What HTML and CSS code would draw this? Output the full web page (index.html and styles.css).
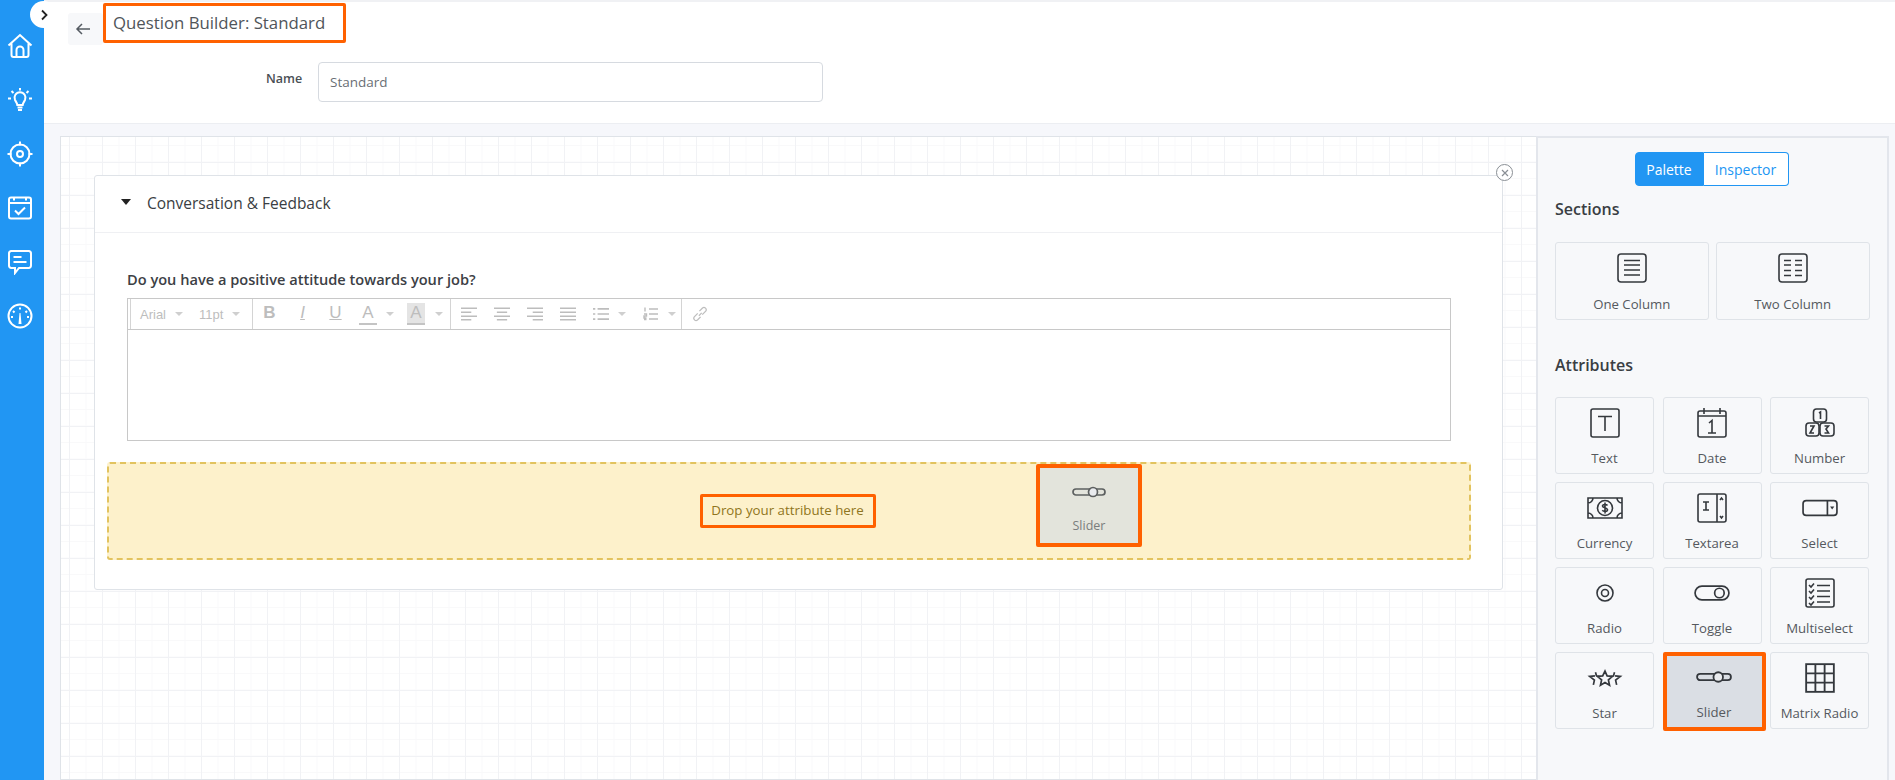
FILE: index.html
```html
<!DOCTYPE html>
<html lang="en">
<head>
  <meta charset="UTF-8">
  <title>Question Builder: Standard</title>
  <link rel="stylesheet" href="styles.css">
</head>
<body>
  <svg class="defs" width="0" height="0">
    <symbol id="i-slider" viewBox="0 0 34 14"><rect x="1" y="4" width="32" height="6" rx="3" fill="none" stroke="currentColor" stroke-width="1.7"/><circle cx="21" cy="7" r="4.500" fill="#e9ebee" stroke="currentColor" stroke-width="1.7"/></symbol>
  </svg>

  <div class="app">
    <aside class="sidebar">
      <button class="side-toggle"><svg width="12" height="12" viewBox="0 0 12 12"><path d="M4 1.5 8.5 6 4 10.5" fill="none" stroke="#222" stroke-width="1.8"/></svg></button>
      <svg class="nav-icon" viewBox="0 0 26 26"><path d="M1.5 12.5 13 2l11.5 10.500M4.500 10.500V22a2 2 0 0 0 2 2h13a2 2 0 0 0 2-2V10.500M9.500 24v-7a3.500 3.500 0 0 1 7 0v7"/></svg>
      <svg class="nav-icon" viewBox="0 0 26 26"><path d="M8 13a5.500 5.500 0 1 1 10 0c-1 1.700-2 3-2.300 5h-5.400C10 16 9 14.700 8 13zM10.500 20.500h5M11 23h4M13 1v2.500M4.500 4l2 2M21.500 4l-2 2M1 11.500h3M22 11.500h3"/></svg>
      <svg class="nav-icon" viewBox="0 0 26 26"><circle cx="13" cy="13" r="9.500"/><circle cx="13" cy="13" r="3"/><path d="M13 0.500v4M13 21.500v4M0.500 13h4M21.500 13h4"/></svg>
      <svg class="nav-icon" viewBox="0 0 26 26"><rect x="2" y="2.500" width="22" height="21" rx="2"/><path d="M2 8h22M7 2.500v3M19 2.500v3M8 15.500l3.500 3.500 6.500-6.500"/></svg>
      <svg class="nav-icon" viewBox="0 0 26 26"><path d="M4 2h18a2.500 2.500 0 0 1 2 2.500v12a2.500 2.500 0 0 1-2 2.500H12l-4 5v-5H4a2.500 2.500 0 0 1-2-2.500v-12A2.500 2.500 0 0 1 4 2z"/><path d="M6.500 8h8M6.500 13h13"/></svg>
      <svg class="nav-icon" viewBox="0 0 26 26"><circle cx="13" cy="13" r="11.500"/><path d="M13 4.500v2M6 8l1.500 1.500M20 8l-1.500 1.500M4 14h2M20 14h2"/><path class="solid" d="M11.500 21 12.500 10h1l1 11z"/></svg>
    </aside>

    <main class="main">
      <header class="page-head">
        <div class="title-row">
          <button class="back-btn"><svg width="16" height="14" viewBox="0 0 16 14"><path d="M15 7H2M7 2 2 7l5 5" fill="none" stroke="#555b62" stroke-width="1.500"/></svg></button>
          <h1 class="page-title">Question Builder: Standard</h1>
        </div>
        <div class="name-row">
          <label class="name-label" for="name">Name</label>
          <input class="name-input" id="name" type="text" value="Standard">
        </div>
      </header>

      <div class="workspace">
        <section class="canvas">
          <div class="section-card">
            <span class="section-close"><svg width="8" height="8" viewBox="0 0 8 8"><path d="M1 1l6 6M7 1 1 7" stroke="#8a8f95" stroke-width="1.200"/></svg></span>
            <div class="section-head">
              <span class="caret"></span>
              <span>Conversation &amp; Feedback</span>
            </div>
            <div class="section-body">
              <div class="question">Do you have a positive attitude towards your job?</div>
              <div class="editor">
                <div class="toolbar">
                  <div class="tool-group fonts">
                    <span class="tool-text w-arial">Arial<i class="mini-caret"></i></span>
                    <span class="tool-text w-size">11pt<i class="mini-caret"></i></span>
                  </div>
                  <div class="tool-group formats">
                    <span class="tool-glyph bold">B</span>
                    <span class="tool-glyph italic">I</span>
                    <span class="tool-glyph under">U</span>
                    <span class="tool-glyph color">A</span><i class="mini-caret"></i>
                    <span class="tool-glyph color shade">A</span><i class="mini-caret"></i>
                  </div>
                  <div class="tool-group aligns">
                    <svg class="tool-icon" viewBox="0 0 14 12"><path d="M0 1h14M0 4.500h9M0 8h14M0 11h9"/></svg>
                    <svg class="tool-icon" viewBox="0 0 14 12"><path d="M0 1h14M2.500 4.500h9M0 8h14M2.500 11h9"/></svg>
                    <svg class="tool-icon" viewBox="0 0 14 12"><path d="M0 1h14M5 4.500h9M0 8h14M5 11h9"/></svg>
                    <svg class="tool-icon" viewBox="0 0 14 12"><path d="M0 1h14M0 4.500h14M0 8h14M0 11h14"/></svg>
                    <svg class="tool-icon list" viewBox="0 0 14 12"><path d="M0 1.500h2M4 1.500h10M0 6h2M4 6h10M0 10.500h2M4 10.500h10"/></svg><i class="mini-caret"></i>
                    <svg class="tool-icon list" viewBox="0 0 14 14"><path d="M1 0.500v4M0 7h2.500v2H0v2h2.500M0 12.500h2.500M5 2h9M5 7h9M5 12h9"/></svg><i class="mini-caret"></i>
                  </div>
                  <div class="tool-group links">
                    <svg class="tool-link" viewBox="0 0 14 14"><path d="M6 8.500 8.500 6M5 6.500 2 9.500a2 2 0 0 0 2.800 2.800L7.500 9.500M9 7.500l3-3A2 2 0 0 0 9.200 1.700L6.500 4.500"/></svg>
                  </div>
                </div>
                <div class="editor-area"></div>
              </div>
              <div class="dropzone">
                <span class="drop-text">Drop your attribute here</span>
                <div class="drag-ghost">
                  <svg class="ghost-icon"><use href="#i-slider"/></svg>
                  <span>Slider</span>
                </div>
              </div>
            </div>
          </div>
        </section>

        <aside class="panel">
          <div class="tabs">
            <button class="tab active">Palette</button>
            <button class="tab">Inspector</button>
          </div>

          <h2 class="panel-title">Sections</h2>
          <div class="palette two">
            <div class="tile">
              <svg class="tile-icon" viewBox="0 0 30 30"><rect x="1" y="1" width="28" height="28" rx="3"/><path d="M7 7.500h16M7 12h16M7 17h16M7 22h16"/></svg>
              <span>One Column</span>
            </div>
            <div class="tile">
              <svg class="tile-icon" viewBox="0 0 30 30"><rect x="1" y="1" width="28" height="28" rx="3"/><path d="M6 7.500h7M6 12h7M6 17.500h7M6 22.500h7M17 7.500h7M17 12h7M17 17.500h7M17 22.500h7"/></svg>
              <span>Two Column</span>
            </div>
          </div>

          <h2 class="panel-title attrs">Attributes</h2>
          <div class="palette three">
            <div class="tile">
              <svg class="tile-icon" viewBox="0 0 30 30"><rect x="1" y="1" width="28" height="28" rx="2"/><path d="M8 8.500h14M15 8.500V23"/></svg>
              <span>Text</span>
            </div>
            <div class="tile">
              <svg class="tile-icon" viewBox="0 0 30 30"><rect x="1" y="3" width="28" height="26" rx="2"/><path d="M1 8h28M7 0v6M23 0v6M12 15l3-2.500V25M11 25h8"/></svg>
              <span>Date</span>
            </div>
            <div class="tile">
              <svg class="tile-icon" viewBox="0 0 30 30"><rect x="8.500" y="1" width="13" height="13" rx="3"/><rect x="1" y="15" width="13" height="13" rx="3"/><rect x="15" y="15" width="14" height="13" rx="3"/><path d="M14 5l1.500-1v7M5 18h4l-4 7h4M19.500 18h4l-2.500 3 2.500 4h-4"/></svg>
              <span>Number</span>
            </div>
            <div class="tile">
              <svg class="tile-icon wide" viewBox="0 0 36 24"><path d="M1 2h34v20H1zM1 7a5 5 0 0 0 5-5M35 7a5 5 0 0 1-5-5M1 17a5 5 0 0 1 5 5M35 17a5 5 0 0 0-5 5"/><circle cx="18" cy="12" r="7.500"/><path d="M20.500 9.500c-1-1.500-5-1.500-5 .5s5 1.500 5 3.800-4 2-5.200.5M18 6.500v11"/></svg>
              <span>Currency</span>
            </div>
            <div class="tile">
              <svg class="tile-icon" viewBox="0 0 30 30"><rect x="1" y="1" width="28" height="28" rx="2"/><path d="M20 1v28M6 9h6M6 17h6M9 9v8M23 7l1.500-2L26 7M23 23l1.500 2 1.500-2"/></svg>
              <span>Textarea</span>
            </div>
            <div class="tile">
              <svg class="tile-icon wide" viewBox="0 0 34 16"><rect x="1" y="1" width="32" height="14" rx="3"/><path d="M24 1v14"/><path class="solid" d="M26.500 6.500h4L28.500 9.500z"/></svg>
              <span>Select</span>
            </div>
            <div class="tile">
              <svg class="tile-icon radio" viewBox="0 0 18 18"><circle cx="9" cy="9" r="8"/><circle cx="9" cy="9" r="3.500"/></svg>
              <span>Radio</span>
            </div>
            <div class="tile">
              <svg class="tile-icon wide" viewBox="0 0 34 16"><rect x="1" y="1.500" width="32" height="13" rx="6.500"/><circle cx="24" cy="8" r="4.500"/></svg>
              <span>Toggle</span>
            </div>
            <div class="tile">
              <svg class="tile-icon" viewBox="0 0 30 30"><rect x="1" y="1" width="28" height="28" rx="2"/><path d="M4 7l2 2 3-3.500M4 13l2 2 3-3.500M4 19l2 2 3-3.500M4 25l2 2 3-3.500M12 7.500h13M12 13h13M12 18.500h13M12 24h13"/></svg>
              <span>Multiselect</span>
            </div>
            <div class="tile">
              <svg class="tile-icon wide" viewBox="0 0 34 16"><path d="M17 1.500l2 4.500 5 .5-3.800 3.300 1.100 5-4.300-2.600-4.300 2.600 1.100-5L9.800 6.500l5-.5zM8 2.500 9 6l3 .5M6 14.500l1-4.500-4.500-3.500 5-.5M26 2.500 25 6l-3 .5M28 14.500l-1-4.500 4.500-3.500-5-.5"/></svg>
              <span>Star</span>
            </div>
            <div class="tile picked">
              <svg class="tile-icon wide"><use href="#i-slider"/></svg>
              <span>Slider</span>
            </div>
            <div class="tile">
              <svg class="tile-icon" viewBox="0 0 26 26"><rect x="1" y="1" width="24" height="24"/><path d="M1 9h24M1 17h24M9 1v24M17 1v24"/></svg>
              <span>Matrix Radio</span>
            </div>
          </div>
        </aside>
      </div>
    </main>
  </div>
</body>
</html>
```

FILE: styles.css
```css
:root {
  --blue: #2196f3;
  --orange: #ff6100;
  --line: #dfe3e8;
  --bg: #f6f7fb;
  --text: #3c4045;
}

* {
  box-sizing: border-box;
}

html, body {
  height: 100%;
}

body {
  margin: 0;
  overflow: hidden;
  font-family: "Open Sans", "Noto Sans", sans-serif;
  color: var(--text);
  background: var(--bg);
}

button {
  font-family: inherit;
}

.defs {
  position: absolute;
}

.app {
  display: flex;
  height: 780px;
}

.sidebar {
  position: relative;
  width: 44px;
  flex: none;
  background: var(--blue);
  display: flex;
  flex-direction: column;
  align-items: center;
  padding: 33px 5px 0 0;
  gap: 28px;
}

.side-toggle {
  position: absolute;
  left: 30px;
  top: 1px;
  width: 27px;
  height: 27px;
  border: none;
  border-radius: 50%;
  background: #fff;
  padding: 0;
  display: flex;
  align-items: center;
  justify-content: center;
}

.nav-icon {
  width: 26px;
  height: 26px;
  fill: none;
  stroke: #fff;
  stroke-width: 2;
}

.nav-icon .solid {
  fill: #fff;
  stroke: none;
}

.main {
  flex: 1;
  min-width: 0;
  display: flex;
  flex-direction: column;
}

.page-head {
  height: 124px;
  flex: none;
  background: #fff;
  border-top: 2px solid #f0f1f4;
  border-bottom: 1px solid #eceef2;
  padding: 1px 0 0 24px;
}

.title-row {
  display: flex;
  align-items: flex-start;
}

.back-btn {
  width: 35px;
  height: 32px;
  margin-top: 10px;
  background: #f7f8fa;
  border: none;
  border-radius: 3px;
  padding: 4px 5px 0 0;
}

.page-title {
  width: 243px;
  height: 40px;
  margin: 0;
  border: 3px solid var(--orange);
  border-radius: 2px;
  padding: 0 0 2px 7px;
  font-size: 16.8px;
  font-weight: 400;
  line-height: 33px;
  color: #50555a;
  white-space: nowrap;
}

.name-row {
  display: flex;
  align-items: flex-start;
  margin-top: 17px;
  padding-left: 198px;
}

.name-label {
  width: 52px;
  padding-top: 8px;
  font-size: 12.5px;
  font-weight: 600;
  color: #4a4f55;
}

.name-input {
  width: 505px;
  height: 40px;
  padding: 0 11px;
  border: 1px solid #d6dae0;
  border-radius: 4px;
  font: 13.5px "Open Sans", sans-serif;
  color: #6a6f75;
}

.workspace {
  flex: 1;
  min-height: 0;
  display: flex;
  margin: 12px 6px 0 16px;
}

.canvas {
  flex: 1;
  min-width: 0;
  border: 1px solid var(--line);
  border-right: none;
  background-color: #fff;
  background-image:
    linear-gradient(#f1f2f5 1px, transparent 1px),
    linear-gradient(90deg, #f1f2f5 1px, transparent 1px),
    linear-gradient(#f9f9fa 1px, transparent 1px),
    linear-gradient(90deg, #f9f9fa 1px, transparent 1px);
  background-size: 33px 33px, 33px 33px, 16.5px 16.5px, 16.5px 16.5px;
  background-position: 0 25px, 8px 0, 0 8px, 8px 0;
  padding: 38px 33px 0 33px;
}

.section-card {
  position: relative;
  height: 415px;
  background: #fff;
  border: 1px solid var(--line);
  border-radius: 3px;
}

.section-close {
  position: absolute;
  right: -11px;
  top: -12px;
  width: 17px;
  height: 17px;
  border: 1px solid #8a8f95;
  border-radius: 50%;
  background: #fff;
  display: flex;
  align-items: center;
  justify-content: center;
}

.section-head {
  height: 57px;
  display: flex;
  align-items: center;
  border-bottom: 1px solid #eff0f3;
  padding: 0 0 2px 26px;
  font-size: 15.5px;
  color: #3a3e43;
}

.caret {
  width: 0;
  height: 0;
  margin-right: 16px;
  margin-bottom: 2px;
  border-left: 5.5px solid transparent;
  border-right: 5.5px solid transparent;
  border-top: 6px solid #222;
}

.section-body {
  padding: 36px 12px 0 10px;
}

.question {
  padding-left: 22px;
  font-size: 14.6px;
  font-weight: 600;
  line-height: 20px;
  color: #3c4045;
}

.editor {
  height: 143px;
  margin: 9px 39px 0 22px;
  border: 1px solid #c8c8c8;
  display: flex;
  flex-direction: column;
}

.toolbar {
  height: 31px;
  flex: none;
  display: flex;
  border-bottom: 1px solid #c8c8c8;
  color: #bdbdbd;
  font-family: "Liberation Sans", Arial, sans-serif;
}

.tool-group {
  display: flex;
  align-items: center;
  flex: none;
  border-right: 1px solid #d4d4d4;
}

.fonts {
  width: 123px;
  padding-left: 9px;
  border-left: 1px solid #d4d4d4;
  margin-left: 2px;
}

.tool-text {
  display: flex;
  align-items: center;
  font-size: 13px;
}

.w-arial {
  width: 59px;
}

.w-size {
  width: 44px;
}

.mini-caret {
  width: 0;
  height: 0;
  flex: none;
  margin-left: 9px;
  border-left: 4px solid transparent;
  border-right: 4px solid transparent;
  border-top: 4px solid #cfcfcf;
}

.formats {
  width: 198px;
}

.tool-glyph {
  width: 33px;
  flex: none;
  text-align: center;
  font-size: 17px;
  line-height: 20px;
  height: 22px;
}

.bold {
  font-weight: 700;
}

.italic {
  font-style: italic;
  text-decoration: underline;
  text-decoration-thickness: 1px;
}

.under {
  text-decoration: underline;
}

.color {
  box-shadow: inset 0 -2px 0 #c4c4c4;
  width: 18px;
  margin-left: 7px;
}

.shade {
  background: #e4e4e4;
  margin-left: 13px;
}

.shade + .mini-caret {
  margin-left: 10px;
}

.aligns {
  width: 231px;
  padding-left: 10px;
  gap: 17px;
}

.aligns .mini-caret {
  margin-left: -8px;
}

.tool-icon {
  width: 16px;
  height: 14px;
  flex: none;
  fill: none;
  stroke: #bdbdbd;
  stroke-width: 1.4;
}

.links {
  border: none;
  padding-left: 10px;
}

.tool-link {
  width: 16px;
  height: 16px;
  fill: none;
  stroke: #bdbdbd;
  stroke-width: 1.1;
}

.editor-area {
  flex: 1;
  background: #fff;
}

.dropzone {
  position: relative;
  height: 98px;
  margin-top: 21px;
  margin-right: 19px;
  margin-left: 2px;
  background: #fdf1cb;
  border: 2px dashed #e2c35f;
  border-radius: 3px;
  display: flex;
  align-items: center;
  justify-content: center;
  padding-right: 3px;
}

.drop-text {
  width: 176px;
  height: 34px;
  border: 3px solid var(--orange);
  border-radius: 2px;
  text-align: center;
  font-size: 13.3px;
  line-height: 27px;
  color: #8f7520;
  white-space: nowrap;
}

.drag-ghost {
  position: absolute;
  left: 927px;
  top: 0;
  width: 106px;
  height: 83px;
  background: #e3e4dc;
  border: 4px solid var(--orange);
  border-radius: 2px;
  display: flex;
  flex-direction: column;
  align-items: center;
  padding-top: 17px;
  font-size: 12.5px;
  color: #7a7d7d;
}

.ghost-icon {
  width: 34px;
  height: 14px;
  color: #5d6060;
  margin-bottom: 18px;
}

.panel {
  width: 353px;
  flex: none;
  background: #f7f8fa;
  border: 2px solid #e3e6ec;
  border-bottom: none;
  padding: 14px 17px 0 17px;
}

.tabs {
  display: flex;
  justify-content: center;
  height: 34px;
  margin-bottom: 13px;
  padding-right: 2px;
}

.tab {
  width: 85px;
  height: 34px;
  border: 1px solid var(--blue);
  background: #fff;
  color: var(--blue);
  font-size: 14px;
  font-weight: 400;
  padding: 0;
  border-radius: 0 4px 4px 0;
  border-left: none;
}

.tab.active {
  width: 69px;
  background: var(--blue);
  color: #fff;
  font-weight: 500;
  border-radius: 4px 0 0 4px;
  border: 1px solid var(--blue);
}

.panel-title {
  margin: 0;
  font-size: 16px;
  font-weight: 600;
  line-height: 20px;
  color: #3a3e43;
}

.panel-title.attrs {
  margin-top: 35px;
}

.palette {
  display: grid;
  margin-top: 23px;
}

.palette.two {
  grid-template-columns: 153.5px 153.5px;
  column-gap: 7.5px;
}

.palette.two .tile {
  height: 78px;
}

.palette.three {
  grid-template-columns: 99px 99px 99px;
  column-gap: 8.5px;
  row-gap: 8px;
  margin-top: 22px;
}

.tile {
  height: 77px;
  border: 1px solid var(--line);
  border-radius: 3px;
  display: flex;
  flex-direction: column;
  align-items: center;
  padding-top: 10px;
  font-size: 13.2px;
  color: #55595e;
}

.tile > span {
  margin-top: auto;
  margin-bottom: 6px;
}

.tile-icon {
  width: 30px;
  height: 30px;
  fill: none;
  stroke: #34383d;
  stroke-width: 1.6;
}

.tile-icon .solid {
  fill: #34383d;
  stroke: none;
}

.tile-icon.wide {
  width: 36px;
  height: 24px;
  margin-top: 3px;
}

.tile-icon.radio {
  width: 18px;
  height: 18px;
  margin-top: 6px;
}

.tile.picked {
  background: #dadee4;
  border: 4px solid var(--orange);
  border-radius: 2px;
  width: 103px;
  height: 79px;
  margin: 0 -2px -2px 0;
  padding-top: 6px;
  color: #55595e;
}

.tile.picked .tile-icon {
  color: #34383d;
  stroke: none;
}
```
